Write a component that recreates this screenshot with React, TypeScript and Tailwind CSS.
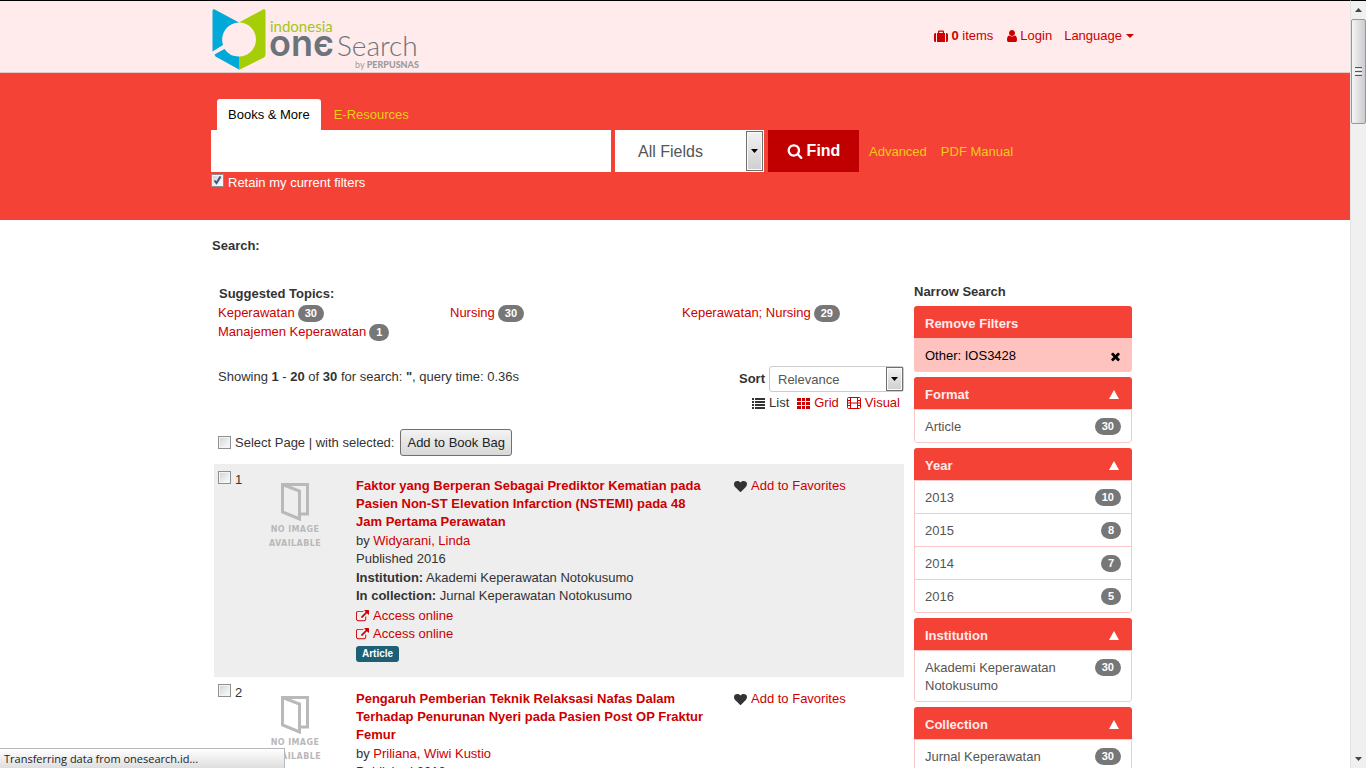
import type { ReactNode } from "react"

type IconProps = { d: string; className?: string }

function Icon({ d, className = "size-[13px]" }: IconProps) {
  return (
    <svg viewBox="0 0 1792 1792" fill="currentColor" aria-hidden="true" className={`inline-block shrink-0 ${className}`}>
      <path d={d} />
    </svg>
  )
}

const icons = {
  user: "M1536 1399q0 109-62.5 187t-150.5 78h-854q-88 0-150.5-78t-62.5-187q0-85 8.5-160.5t31.5-152 58.5-131 94-89 134.5-34.5q131 128 313 128t313-128q76 0 134.5 34.5t94 89 58.5 131 31.5 152 8.5 160.5zm-256-887q0 159-112.5 271.5t-271.5 112.5-271.5-112.5-112.5-271.5 112.5-271.5 271.5-112.5 271.5 112.5 112.5 271.5z",
  search:
    "M1216 832q0-185-131.5-316.5t-316.5-131.5-316.5 131.5-131.5 316.5 131.5 316.5 316.5 131.5 316.5-131.5 131.5-316.5zm512 832q0 52-38 90t-90 38q-54 0-90-38l-343-342q-179 124-399 124-143 0-273.5-55.5t-225-150-150-225-55.5-273.5 55.5-273.5 150-225 225-150 273.5-55.5 273.5 55.5 225 150 150 225 55.5 273.5q0 220-124 399l343 343q37 37 37 90z",
  external:
    "M1408 928v320q0 119-84.5 203.5t-203.5 84.5h-832q-119 0-203.5-84.5t-84.5-203.5v-832q0-119 84.5-203.5t203.5-84.5h704q14 0 23 9t9 23v64q0 14-9 23t-23 9h-704q-66 0-113 47t-47 113v832q0 66 47 113t113 47h832q66 0 113-47t47-113v-320q0-14 9-23t23-9h64q14 0 23 9t9 23zm384-864v512q0 26-19 45t-45 19-45-19l-176-176-652 652q-10 10-23 10t-23-10l-114-114q-10-10-10-23t10-23l652-652-176-176q-19-19-19-45t19-45 45-19h512q26 0 45 19t19 45z",
  times:
    "M1490 1322q0 40-28 68l-136 136q-28 28-68 28t-68-28l-294-294-294 294q-28 28-68 28t-68-28l-136-136q-28-28-28-68t28-68l294-294-294-294q-28-28-28-68t28-68l136-136q28-28 68-28t68 28l294 294 294-294q28-28 68-28t68 28l136 136q28 28 28 68t-28 68l-294 294 294 294q28 28 28 68z",
  heart:
    "M896 1664q-26 0-44-18l-624-602q-10-8-27.500-26t-55.500-65.500-68-97.500-53.500-121-23.500-138q0-220 127-344t351-124q62 0 126.500 21.500t120 58 95.500 68.500 76 68q36-36 76-68t95.500-68.500 120-58 126.500-21.500q224 0 351 124t127 344q0 221-229 450l-623 600q-18 18-44 18z",
}

function SuitcaseIcon() {
  return (
    <svg viewBox="0 0 14 13" fill="currentColor" aria-hidden="true" className="h-[13px] w-[14px] shrink-0">
      <path d="M2 3v9H1.500Q0 12 0 10.500v-6Q0 3 1.500 3zM11 3V12H3V3h1V1.500Q4 .5 5 .5h4q1 0 1 1V3zM5.200 3h3.600V1.700H5.200zM12 3h.5Q14 3 14 4.500v6q0 1.500-1.500 1.500H12z" />
    </svg>
  )
}

function ListIcon() {
  return (
    <svg viewBox="0 0 13 11" fill="currentColor" aria-hidden="true" className="h-[11px] w-[13px]">
      <path d="M0 0h2v2H0zM3 0h10v2H3zM0 3h2v2H0zM3 3h10v2H3zM0 6h2v2H0zM3 6h10v2H3zM0 9h2v2H0zM3 9h10v2H3z" />
    </svg>
  )
}

function GridIcon() {
  return (
    <svg viewBox="0 0 13 11" fill="currentColor" aria-hidden="true" className="h-[11px] w-[13px]">
      <path d="M0 0h4v3H0zM5 0h3v3H5zM9 0h4v3H9zM0 4h4v3H0zM5 4h3v3H5zM9 4h4v3H9zM0 8h4v3H0zM5 8h3v3H5zM9 8h4v3H9z" />
    </svg>
  )
}

function FilmIcon() {
  return (
    <svg viewBox="0 0 14 12" fill="none" stroke="currentColor" aria-hidden="true" className="h-[12px] w-[14px]">
      <rect x=".5" y=".5" width="13" height="11" rx="1" />
      <path d="M3.500 1v10M10.500 1v10M3.500 6h7M1 3.500h2M1 6h2M1 8.500h2M11 3.500h2M11 6h2M11 8.500h2" />
    </svg>
  )
}

function Logo() {
  return (
    <svg viewBox="0 0 210 64" role="img" aria-label="Indonesia OneSearch by Perpusnas" className="h-[64px] w-[210px]">
      <path fill="#00a9d8" d="M.5 4Q.5 1.500 2.800 2.500L27 15.500A17 17 0 0 0 11 38L.5 44.500z" />
      <path fill="#00a9d8" d="M2.500 47.500 12.500 42A17 17 0 0 0 27 49.500v13L3.500 49.500z" />
      <path fill="#a6ce06" d="M27 15.500 51 2.500q2.500-1 2.500 1.500v43.500q0 2-1.500 3L27 63V49.500a17 17 0 0 0 0-34z" />
      <text x="58" y="25" fill="#a3c51c" className="font-['Lato'] text-[15px]">
        indonesia
      </text>
      <text x="57" y="49" fill="#6b737b" className="font-['Inter'] text-[36px] font-semibold">
        onє
      </text>
      <text x="125" y="49" fill="#6b737b" className="font-['Lato'] text-[28px] font-light">
        Search
      </text>
      <text x="143" y="61" fill="#9c9c9c" className="font-['Lato'] text-[9px]">
        by <tspan className="font-black">PERPUSNAS</tspan>
      </text>
    </svg>
  )
}

function A({ children, className = "" }: { children: ReactNode; className?: string }) {
  return (
    <a href="#" className={`text-[#cc0000] hover:underline ${className}`}>
      {children}
    </a>
  )
}

function Badge({ children }: { children: ReactNode }) {
  return (
    <span className="inline-block h-[17px] shrink-0 rounded-full bg-[#777] px-[7px] text-center text-[11px] leading-[17px] font-bold text-white">
      {children}
    </span>
  )
}

function Check({ id, label, checked }: { id: string; label: string; checked?: boolean }) {
  return (
    <span className="relative block size-[13px] shrink-0">
      <input
        id={id}
        type="checkbox"
        aria-label={label}
        defaultChecked={checked}
        className="peer block size-[13px] appearance-none border border-[#8e8f8f] bg-linear-to-br from-[#cfd2d6] to-white shadow-[inset_0_0_0_1px_#f4f4f4]"
      />
      <svg viewBox="0 0 13 13" fill="none" stroke="#3b5688" strokeWidth="2" className="pointer-events-none absolute inset-0 hidden peer-checked:block">
        <path d="M3.500 6.500 5.500 9 9.500 2.500" />
      </svg>
    </span>
  )
}

function SelectArrow() {
  return (
    <span className="pointer-events-none absolute inset-y-px right-px flex w-[17px] items-center justify-center border border-[#707070] bg-linear-to-b from-[#f2f2f2] to-[#cfcfcf] shadow-[inset_0_0_0_1px_#fafafa]">
      <svg viewBox="0 0 7 4" className="h-[4px] w-[7px]">
        <path d="M0 0h7L3.500 4z" />
      </svg>
    </span>
  )
}

function NoImage() {
  return (
    <div className="flex flex-col items-center text-[#b9b9b9]">
      <svg viewBox="0 0 28 38" fill="none" stroke="currentColor" strokeWidth="3" aria-hidden="true" className="h-[38px] w-[28px]">
        <path d="M1.500 1.500 18.500 8v28L1.500 29zM1.500 1.500h25V31H19" />
      </svg>
      <div className="mt-0.5 text-center font-['DejaVu_Sans'] text-[8px] leading-[14px] font-bold tracking-wider">
        NO IMAGE
        <br />
        AVAILABLE
      </div>
    </div>
  )
}

const topics = [
  { name: "Keperawatan", count: 30 },
  { name: "Nursing", count: 30 },
  { name: "Keperawatan; Nursing", count: 29 },
  { name: "Manajemen Keperawatan", count: 1 },
]

const facets = [
  { title: "Format", items: [{ name: "Article", count: 30 }] },
  {
    title: "Year",
    items: [
      { name: "2013", count: 10 },
      { name: "2015", count: 8 },
      { name: "2014", count: 7 },
      { name: "2016", count: 5 },
    ],
  },
  { title: "Institution", items: [{ name: "Akademi Keperawatan Notokusumo", count: 30 }] },
  { title: "Collection", items: [{ name: "Jurnal Keperawatan Notokusumo", count: 30 }] },
]

const records = [
  {
    title: "Faktor yang Berperan Sebagai Prediktor Kematian pada Pasien Non-ST Elevation Infarction (NSTEMI) pada 48 Jam Pertama Perawatan",
    author: "Widyarani, Linda",
    year: "2016",
  },
  {
    title: "Pengaruh Pemberian Teknik Relaksasi Nafas Dalam Terhadap Penurunan Nyeri pada Pasien Post OP Fraktur Femur",
    author: "Priliana, Wiwi Kustio",
    year: "2013",
  },
]

function Header() {
  return (
    <header className="border-t border-b border-t-black border-b-[#e7c6c6] bg-[#ffebeb]">
      <div className="mx-auto flex h-[71px] max-w-[928px] items-start justify-between">
        <a href="#" className="mt-1.5 ml-px">
          <Logo />
        </a>
        <nav className="mt-[26px] mr-[5px] flex gap-3">
          <A className="flex items-center gap-[3px]">
            <SuitcaseIcon />
            <span>
              <b>0</b> items
            </span>
          </A>
          <A className="flex items-center gap-px">
            <Icon d={icons.user} className="size-[14px]" />
            Login
          </A>
          <A className="flex items-center gap-1">
            Language
            <svg viewBox="0 0 8 4" fill="currentColor" className="h-1 w-2">
              <path d="M0 0h8L4 4z" />
            </svg>
          </A>
        </nav>
      </div>
    </header>
  )
}

function SearchBar() {
  return (
    <section className="h-[147px] bg-[#f44336]">
      <form className="mx-auto max-w-[928px] pt-[26px]">
        <div className="flex pl-1.5">
          <a href="#" className="rounded-t-[3px] bg-white px-[11px] pt-[7px] pb-1.5 text-black">
            Books &amp; More
          </a>
          <a href="#" className="px-[13px] pt-[7px] text-[#e8cf12]">
            E-Resources
          </a>
        </div>
        <div className="flex h-[42px] items-center gap-1">
          <input type="text" aria-label="Search terms" className="h-full w-[400px] bg-white px-3 text-base text-[#555] outline-none" />
          <div className="relative h-full w-[149px]">
            <select aria-label="Search type" className="h-full w-full appearance-none bg-white pt-px pl-[23px] text-base text-[#555]">
              <option>All Fields</option>
            </select>
            <SelectArrow />
          </div>
          <button type="button" className="flex h-full w-[91px] items-center justify-center gap-1 bg-[#c00000] text-base font-bold text-white">
            <Icon d={icons.search} className="size-4" />
            Find
          </button>
          <a href="#" className="ml-1.5 pt-0.5 text-[#f2cb17]">
            Advanced
          </a>
          <a href="#" className="ml-2.5 pt-0.5 text-[#f2cb17]">
            PDF Manual
          </a>
        </div>
        <div className="flex gap-1 pt-[2px]">
          <Check id="retain" label="Retain my current filters" checked />
          <label htmlFor="retain" className="text-white">
            Retain my current filters
          </label>
        </div>
      </form>
    </section>
  )
}

function Record({ index, title, author, year }: { index: number; title: string; author: string; year: string }) {
  return (
    <li className="ml-[3px] flex h-[213px] pt-[7px] pl-1 odd:bg-[#eee]">
      <div className="flex w-[41px] gap-1">
        <Check id={`rec-${index}`} label={`Select record ${index}`} />
        <label htmlFor={`rec-${index}`}>{index}</label>
      </div>
      <div className="w-[72px] pt-3">
        <NoImage />
      </div>
      <div className="ml-[25px] flex w-[378px] flex-col gap-px pt-1.5 pr-6">
        <A className="font-bold">{title}</A>
        <div>
          by <A>{author}</A>
          <br />
          Published {year}
        </div>
        <div>
          <b>Institution:</b> Akademi Keperawatan Notokusumo
          <br />
          <b>In collection:</b> Jurnal Keperawatan Notokusumo
        </div>
        <div className="pt-px">
          {[1, 2].map((n) => (
            <A key={n} className="flex items-center gap-1">
              <Icon d={icons.external} />
              Access online
            </A>
          ))}
        </div>
        <span className="mt-0.5 self-start rounded-[3px] bg-[#1d5f75] px-1.5 text-[10px] leading-4 font-bold text-white">Article</span>
      </div>
      <div className="pt-1.5">
        <A className="flex items-center gap-1">
          <Icon d={icons.heart} className="size-[13px] text-[#333]" />
          Add to Favorites
        </A>
      </div>
    </li>
  )
}

function Results() {
  return (
    <main className="w-[693px]">
      <section className="pt-[18px] pl-[7px]">
        <h4 className="pl-px font-bold">Suggested Topics:</h4>
        <ul className="mt-px grid grid-cols-[232px_232px_1fr] gap-y-px">
          {topics.map((t) => (
            <li key={t.name} className="flex items-center gap-[3px]">
              <A>{t.name}</A>
              <Badge>{t.count}</Badge>
            </li>
          ))}
        </ul>
      </section>

      <div className="mt-[25px] flex justify-between pl-[7px]">
        <p className="pt-0.5">
          Showing <b>1</b> - <b>20</b> of <b>30</b> for search: <b>&quot;</b>, query time: 0.36s
        </p>
        <div>
          <div className="flex items-center gap-1">
            <label htmlFor="sort" className="font-bold">
              Sort
            </label>
            <div className="relative h-[26px] w-[135px]">
              <select id="sort" className="h-full w-full appearance-none rounded-[3px] border border-[#ccc] bg-white pt-px pl-2 text-[#555]">
                <option>Relevance</option>
              </select>
              <SelectArrow />
            </div>
          </div>
          <div className="mt-0.5 flex justify-end gap-2 pr-1">
            <span className="flex items-center gap-1">
              <ListIcon />
              List
            </span>
            <A className="flex items-center gap-1">
              <GridIcon />
              Grid
            </A>
            <A className="flex items-center gap-1">
              <FilmIcon />
              Visual
            </A>
          </div>
        </div>
      </div>

      <form className="mt-[17px] flex items-center pl-[7px]">
        <Check id="select-page" label="Select Page" />
        <label htmlFor="select-page" className="ml-1 pt-px">
          Select Page | with selected:
        </label>
        <button
          type="button"
          className="ml-1.5 h-[27px] rounded-[3px] border border-[#707070] bg-linear-to-b from-[#f3f3f3] to-[#d8d8d8] px-1.5 text-[#222]"
        >
          Add to Book Bag
        </button>
      </form>

      <ol className="mt-2">
        {records.map((r, i) => (
          <Record key={r.title} index={i + 1} {...r} />
        ))}
      </ol>
    </main>
  )
}

function Sidebar() {
  return (
    <aside className="flex w-[218px] flex-col gap-[5px] pt-4">
      <h4 className="font-bold">Narrow Search</h4>
      <section className="overflow-hidden rounded-[3px]">
        <h5 className="bg-[#f44336] px-[11px] pt-[9px] pb-[5px] font-bold text-[#ffebeb]">Remove Filters</h5>
        <a href="#" className="flex items-center justify-between bg-[#ffc3bf] px-[10px] pt-[9px] pb-[7px] pl-[11px] text-black">
          Other: IOS3428
          <Icon d={icons.times} className="size-[13px]" />
        </a>
      </section>
      {facets.map((f) => (
        <section key={f.title} className="overflow-hidden rounded-[3px]">
          <h5 className="flex justify-between bg-[#f44336] px-[11px] pt-[9px] pb-[5px] font-bold text-[#ffebeb]">
            {f.title}
            <svg viewBox="0 0 10 9" fill="white" className="mt-1 mr-0.5 h-[9px] w-[10px]">
              <path d="M5 0l5 9H0z" />
            </svg>
          </h5>
          <ul className="divide-y divide-[#f9c9c8] rounded-b-[3px] border border-[#f9c9c8]">
            {f.items.map((item) => (
              <li key={item.name}>
                <a href="#" className="flex items-start justify-between gap-4 px-[10px] pt-2 pb-1.5 text-[#555]">
                  {item.name}
                  <Badge>{item.count}</Badge>
                </a>
              </li>
            ))}
          </ul>
        </section>
      ))}
    </aside>
  )
}

function Scrollbar() {
  return (
    <div aria-hidden="true" className="flex w-4 shrink-0 flex-col items-center border-t border-l border-t-black border-l-[#e3e3e3] bg-[#f0f0f0]">
      <svg viewBox="0 0 7 4" fill="#444" className="mt-[7px] h-[4px] w-[7px]">
        <path d="M0 4h7L3.500 0z" />
      </svg>
      <div className="mt-[7px] flex h-[105px] w-[15px] flex-col items-center justify-center gap-px rounded-[2px] border border-[#979797] bg-linear-to-r from-[#f5f5f5] to-[#cbcbcf]">
        <span className="h-px w-[7px] bg-[#555]" />
        <span className="h-px w-[7px] bg-white" />
        <span className="h-px w-[7px] bg-[#555]" />
        <span className="h-px w-[7px] bg-white" />
        <span className="h-px w-[7px] bg-[#555]" />
      </div>
      <svg viewBox="0 0 7 4" fill="#444" className="mt-auto mb-[7px] h-[4px] w-[7px]">
        <path d="M0 0h7L3.500 4z" />
      </svg>
    </div>
  )
}

export default function App() {
  return (
    <div className="flex h-screen overflow-hidden bg-white font-['Liberation_Sans',Arial,sans-serif] text-[13px] leading-[18px] text-[#333]">
      <div className="min-w-0 flex-1 overflow-hidden">
        <Header />
        <SearchBar />
        <div className="mx-auto max-w-[928px] pt-[17px]">
          <p className="pl-px font-bold">Search:</p>
          <div className="mt-3 flex gap-[10px]">
            <Results />
            <Sidebar />
          </div>
        </div>
      </div>
      <Scrollbar />
      <div
        role="status"
        className="fixed bottom-0 left-0 h-5 w-[285px] border-t border-r border-[#b8b8b8] bg-linear-to-b from-white to-[#dedede] pl-1 font-['Open_Sans',sans-serif] text-[11px] leading-[20px] text-[#222]"
      >
        Transferring data from onesearch.id...
      </div>
    </div>
  )
}
